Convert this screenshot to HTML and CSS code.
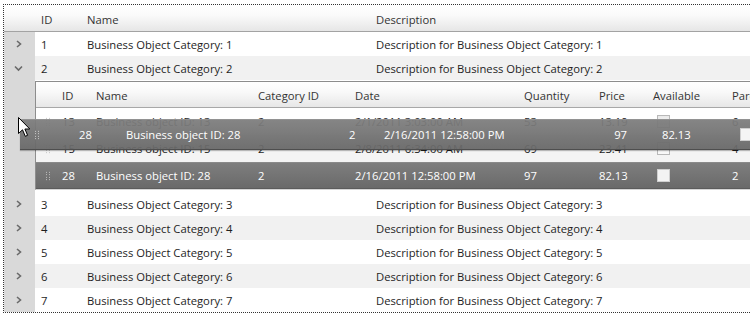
FILE: index.html
```html
<!DOCTYPE html>
<html>
<head>
<meta charset="utf-8">
<link rel="stylesheet" href="styles.css">
</head>
<body>
<div class="grid">
  <div class="mrow mhead">
    <div class="ind"></div>
    <div class="c">ID</div>
    <div class="c">Name</div>
    <div class="c">Description</div>
  </div>
  <div class="mrow">
    <div class="ind"><svg class="chev" width="8" height="8" viewBox="0 0 8 8"><polyline points="2,1 5.5,4 2,7"/></svg></div>
    <div class="c">1</div>
    <div class="c">Business Object Category: 1</div>
    <div class="c">Description for Business Object Category: 1</div>
  </div>
  <div class="mrow alt">
    <div class="ind"><svg class="chev" width="9" height="8" viewBox="0 0 9 8"><polyline points="1,2.5 4.5,6 8,2.5"/></svg></div>
    <div class="c">2</div>
    <div class="c">Business Object Category: 2</div>
    <div class="c">Description for Business Object Category: 2</div>
  </div>
  <div class="detail">
    <div class="ind"></div>
    <div class="nested">
      <div class="nrow nhead">
        <div class="g"></div>
        <div class="c">ID</div>
        <div class="c">Name</div>
        <div class="c">Category ID</div>
        <div class="c">Date</div>
        <div class="c">Quantity</div>
        <div class="c">Price</div>
        <div class="c">Available</div>
        <div class="c">Parent</div>
      </div>
      <div class="nrow">
        <div class="g"><span class="grip"></span></div>
        <div class="c">13</div>
        <div class="c">Business object ID: 13</div>
        <div class="c">2</div>
        <div class="c">2/1/2011 3:03:00 AM</div>
        <div class="c">53</div>
        <div class="c">13.19</div>
        <div class="c"><span class="cb"></span></div>
        <div class="c">6</div>
      </div>
      <div class="nrow nalt">
        <div class="g"><span class="grip"></span></div>
        <div class="c">15</div>
        <div class="c">Business object ID: 15</div>
        <div class="c">2</div>
        <div class="c">2/8/2011 6:34:00 AM</div>
        <div class="c">69</div>
        <div class="c">23.41</div>
        <div class="c"><span class="cb"></span></div>
        <div class="c">4</div>
      </div>
      <div class="nrow nsel">
        <div class="g"><span class="grip"></span></div>
        <div class="c">28</div>
        <div class="c">Business object ID: 28</div>
        <div class="c">2</div>
        <div class="c">2/16/2011 12:58:00 PM</div>
        <div class="c">97</div>
        <div class="c">82.13</div>
        <div class="c"><span class="cb"></span></div>
        <div class="c">2</div>
      </div>
    </div>
  </div>
  <div class="mrow">
    <div class="ind"><svg class="chev" width="8" height="8" viewBox="0 0 8 8"><polyline points="2,1 5.5,4 2,7"/></svg></div>
    <div class="c">3</div>
    <div class="c">Business Object Category: 3</div>
    <div class="c">Description for Business Object Category: 3</div>
  </div>
  <div class="mrow alt">
    <div class="ind"><svg class="chev" width="8" height="8" viewBox="0 0 8 8"><polyline points="2,1 5.5,4 2,7"/></svg></div>
    <div class="c">4</div>
    <div class="c">Business Object Category: 4</div>
    <div class="c">Description for Business Object Category: 4</div>
  </div>
  <div class="mrow">
    <div class="ind"><svg class="chev" width="8" height="8" viewBox="0 0 8 8"><polyline points="2,1 5.5,4 2,7"/></svg></div>
    <div class="c">5</div>
    <div class="c">Business Object Category: 5</div>
    <div class="c">Description for Business Object Category: 5</div>
  </div>
  <div class="mrow alt">
    <div class="ind"><svg class="chev" width="8" height="8" viewBox="0 0 8 8"><polyline points="2,1 5.5,4 2,7"/></svg></div>
    <div class="c">6</div>
    <div class="c">Business Object Category: 6</div>
    <div class="c">Description for Business Object Category: 6</div>
  </div>
  <div class="mrow">
    <div class="ind"><svg class="chev" width="8" height="8" viewBox="0 0 8 8"><polyline points="2,1 5.5,4 2,7"/></svg></div>
    <div class="c">7</div>
    <div class="c">Business Object Category: 7</div>
    <div class="c">Description for Business Object Category: 7</div>
  </div>

  <div class="drag">
    <div class="dg"><span class="grip light"></span></div>
    <div class="d1">28</div>
    <div class="d2">Business object ID: 28</div>
    <div class="d3">2</div>
    <div class="d4">2/16/2011 12:58:00 PM</div>
    <div class="d5">97</div>
    <div class="d6">82.13</div>
    <div class="d7"><span class="cb"></span></div>
  </div>
  <svg class="cursor" width="14" height="21" viewBox="0 0 14 21"><path d="M0.5,0.5 L0.5,16.5 L4.5,12.8 L7.3,19.3 L9.6,18.3 L6.9,12 L11.8,12 Z"/></svg>
</div>
</body>
</html>
```
FILE: styles.css
```css
html,body{margin:0;padding:0;}
body{
  width:750px;height:316px;overflow:hidden;
  padding:4px 0 0 3px;box-sizing:border-box;
  background:#fff;
  font-family:"Open Sans","Noto Sans",sans-serif;
  font-size:11.25px;
  color:#1e1e1e;
}
.grid{
  position:relative;
  width:800px;
  border:1px dotted #333;
  border-right:none;
}
.mrow{
  display:grid;
  grid-template-columns:31px 46px 289px 1fr;
  height:24px;
  align-items:stretch;
  background:#fff;
}
.mrow.alt{background:#f1f1f1;}
.mrow .c{padding-left:6px;display:flex;align-items:center;white-space:nowrap;}
.ind{background:#d9d9d9;display:flex;align-items:center;justify-content:center;}
.mhead{
  height:26px;
  border-bottom:1px solid #a3a3a3;
  background:linear-gradient(#ffffff,#fafafa 40%,#e6e6e6);
  color:#333;
}
.mhead .c{padding-top:3px;}
.mhead .ind{background:transparent;}
.chev{fill:none;stroke:#6a6a6a;stroke-width:1.6;margin-left:-2px;}

.detail{
  display:grid;
  grid-template-columns:31px 1fr;
  height:112px;
}
.nested{
  margin-top:1px;
  border-top:1px solid #8d8d8d;
  border-left:1px solid #8d8d8d;
  height:107px;
  border-bottom:1px solid #d6d6d6;
  background:#fff;
}
.nrow{
  display:grid;
  grid-template-columns:20px 34px 162px 97px 169px 75px 54px 79px 80px;
  height:27px;
  background:#fff;
}
.nrow .c{padding-left:6px;display:flex;align-items:center;white-space:nowrap;}
.nrow.nalt{background:#f4f4f4;}
.nhead{
  height:25px;
  border-bottom:1px solid #a8a8a8;
  background:linear-gradient(#ffffff,#f9f9f9 40%,#e7e7e7);
  color:#333;
}
.nhead .c{padding-top:2px;}
.g{display:flex;align-items:center;justify-content:flex-start;padding-left:9px;}
.grip{
  display:block;width:5px;height:10px;
  background-image:radial-gradient(circle,#b9b9b9 0.7px,transparent 0.8px);
  background-size:3px 2.5px;
}
.grip.light{
  background-image:radial-gradient(circle,#dedede 0.7px,transparent 0.8px);
}
.nsel{
  background:linear-gradient(#7e7e7e,#6a6a6a);
  color:#fff;
  border-top:1px solid #8a8a8a;
  border-bottom:1px solid #5c5c5c;
  height:25px;
}
.nsel .grip{background-image:radial-gradient(circle,#d0d0d0 0.7px,transparent 0.8px);}
.cb{
  display:block;width:11px;height:11px;
  border:1px solid #b8b8b8;
  background:linear-gradient(#e9e9e9,#fafafa);
  margin-left:4px;
}
.nsel .cb{border-color:#cfcfcf;background:#f3f3f3;}

.drag{
  position:absolute;
  left:16px;top:114px;
  width:760px;height:29px;
  background:linear-gradient(rgba(125,125,125,0.94),rgba(104,104,104,0.94));
  border-top:1px solid rgba(150,150,150,0.9);
  border-bottom:1px solid #4e4e4e;
  box-shadow:0 1px 1px rgba(0,0,0,0.25);
  color:#fff;
  display:grid;
  grid-template-columns:53px 47px 223px 35px 182px 73px 101px 60px;
  align-items:center;
  white-space:nowrap;
}
.drag .dg{padding-left:14px;}
.drag .d1,.drag .d2,.drag .d3,.drag .d4{padding-left:6px;}
.drag .d5{text-align:right;padding-right:6px;}
.drag .d6{padding-left:29px;}
.drag .d7{padding-left:2px;}
.drag .cb{border-color:#cfcfcf;background:#f5f5f5;}
.cursor{
  position:absolute;left:14px;top:112px;
}
.cursor path{fill:#fff;stroke:#000;stroke-width:1;}
```
